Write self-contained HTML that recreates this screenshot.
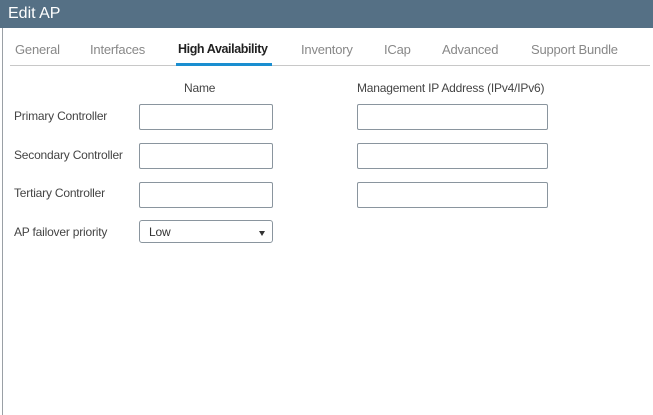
<!DOCTYPE html>
<html><head><style>
body{margin:0;width:653px;height:415px;background:#fff;font-family:"Liberation Sans",sans-serif;position:relative;overflow:hidden}
.hd{position:absolute;left:0;top:0;width:653px;height:28px;background:#557085;color:#fff;font-size:16px;line-height:28px}
.hd span{position:absolute;left:8px;top:0}
.lb{position:absolute;left:2px;top:28px;width:1px;height:387px;background:#9aa0a6}
.t{position:absolute;top:42px;font-size:13px;color:#888;letter-spacing:-0.2px}
.ln{position:absolute;left:10px;top:65px;width:640px;height:1px;background:#c8c8c8}
.ul{position:absolute;left:176px;top:63px;width:96px;height:3px;background:#1a8ed0}
.l{position:absolute;font-size:12px;color:#444;letter-spacing:-0.2px}
.i{position:absolute;box-sizing:border-box;border:1px solid #8a959e;border-radius:2px;height:26px;background:#fff}
</style></head><body>
<div class="hd"><span>Edit AP</span></div>
<div class="lb"></div>
<div class="t" style="left:15px">General</div>
<div class="t" style="left:90px">Interfaces</div>
<div class="t" style="left:178px;color:#222;font-weight:bold;font-size:12.5px;letter-spacing:-0.4px;top:42px">High Availability</div>
<div class="t" style="left:301px">Inventory</div>
<div class="t" style="left:384px">ICap</div>
<div class="t" style="left:442px">Advanced</div>
<div class="t" style="left:531px">Support Bundle</div>
<div class="ln"></div><div class="ul"></div>
<div class="l" style="left:184px;top:81px">Name</div>
<div class="l" style="left:357px;top:81px">Management IP Address (IPv4/IPv6)</div>
<div class="l" style="left:14px;top:109px">Primary Controller</div>
<div class="l" style="left:14px;top:148px">Secondary Controller</div>
<div class="l" style="left:14px;top:186px">Tertiary Controller</div>
<div class="l" style="left:14px;top:225px">AP failover priority</div>
<div class="i" style="left:139px;top:104px;width:134px"></div>
<div class="i" style="left:139px;top:143px;width:134px"></div>
<div class="i" style="left:139px;top:182px;width:134px"></div>
<div class="i" style="left:357px;top:104px;width:191px"></div>
<div class="i" style="left:357px;top:143px;width:191px"></div>
<div class="i" style="left:357px;top:182px;width:191px"></div>
<div class="i" style="left:139px;top:220px;width:134px;height:23px;border-radius:3px"></div>
<div class="l" style="left:149px;top:225px;color:#333">Low</div>
<div style="position:absolute;left:259px;top:231px;width:0;height:0;border-left:3px solid transparent;border-right:3px solid transparent;border-top:5px solid #333"></div>
</body></html>
